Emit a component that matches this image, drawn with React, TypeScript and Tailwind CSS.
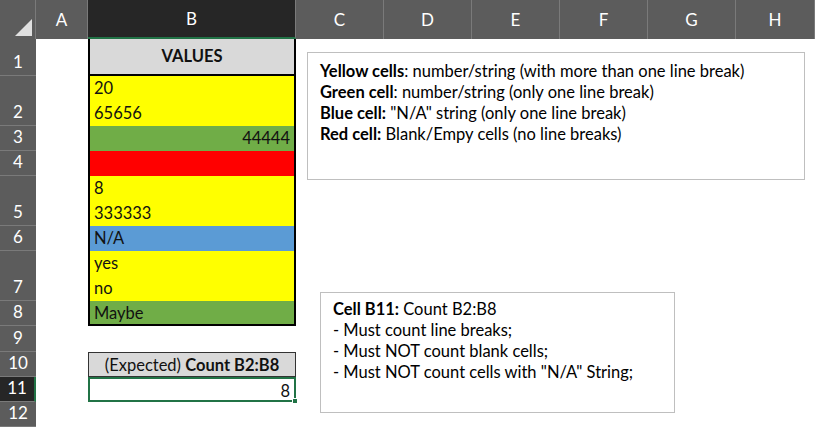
import React from 'react'

const cols = [
  { l: 'A', w: 52 },
  { l: 'B', w: 208 },
  { l: 'C', w: 88 },
  { l: 'D', w: 88 },
  { l: 'E', w: 88 },
  { l: 'F', w: 88 },
  { l: 'G', w: 88 },
  { l: 'H', w: 79 },
]

const rows = [
  { n: 1, h: 37 },
  { n: 2, h: 50 },
  { n: 3, h: 25 },
  { n: 4, h: 25 },
  { n: 5, h: 50 },
  { n: 6, h: 25 },
  { n: 7, h: 50 },
  { n: 8, h: 25 },
  { n: 9, h: 26 },
  { n: 10, h: 25 },
  { n: 11, h: 25 },
  { n: 12, h: 25 },
]

function BCell({ n }: { n: number }) {
  const base = 'h-full px-[4px] text-[16.5px] leading-[25px] text-[#111]'
  switch (n) {
    case 1:
      return <div className={`${base} bg-[#d9d9d9] border-x-2 border-b-2 border-black flex items-center justify-center font-bold`}>VALUES</div>
    case 2:
      return <div className={`${base} bg-[#ffff00] border-x-2 border-black`}><div>20</div><div>65656</div></div>
    case 3:
      return <div className={`${base} bg-[#70ad47] border-x-2 border-black text-right`}>44444</div>
    case 4:
      return <div className={`${base} bg-[#ff0000] border-x-2 border-black`} />
    case 5:
      return <div className={`${base} bg-[#ffff00] border-x-2 border-black`}><div>8</div><div>333333</div></div>
    case 6:
      return <div className={`${base} bg-[#5b9bd5] border-x-2 border-black`}>N/A</div>
    case 7:
      return <div className={`${base} bg-[#ffff00] border-x-2 border-black`}><div>yes</div><div>no</div></div>
    case 8:
      return <div className={`${base} bg-[#70ad47] border-x-2 border-b-2 border-black`}>Maybe</div>
    case 10:
      return <div className={`${base} bg-[#d9d9d9] border border-[#333] text-center leading-[23px]`}>(Expected) <b>Count B2:B8</b></div>
    case 11:
      return (
        <div className={`${base} relative bg-white border-2 border-[#217346] text-right leading-[21px]`}>
          8
          <span className="absolute -right-[4px] -bottom-[4px] w-[6px] h-[6px] bg-[#217346] border border-white" />
        </div>
      )
    default:
      return <div className="h-full bg-white" />
  }
}

export default function App() {
  return (
    <div className="relative w-[815px] h-[431px] overflow-hidden bg-white" style={{ fontFamily: 'Lato, "Open Sans", sans-serif' }}>
      <div className="flex h-[39px] bg-[#5c5c5c]">
        <div className="w-[36px] h-full border-r border-[#7a7a7a] relative">
          <div className="absolute right-[3px] bottom-[3px] w-0 h-0 border-l-[17px] border-l-transparent border-b-[17px] border-b-[#e0e0e0]" />
        </div>
        {cols.map(c => (
          <div
            key={c.l}
            className={`shrink-0 flex items-center justify-center text-[17px] text-white border-r border-[#7a7a7a] ${c.l === 'B' ? 'bg-[#262626] border-b-2 border-b-[#217346]' : ''}`}
            style={{ width: c.w }}
          >
            {c.l}
          </div>
        ))}
      </div>
      {rows.map(r => (
        <div key={r.n} className="flex" style={{ height: r.h }}>
          <div className={`w-[36px] shrink-0 flex items-end justify-center pb-[1px] text-[17px] text-white border-b border-[#7a7a7a] ${r.n === 11 ? 'bg-[#262626] border-r-2 border-r-[#217346]' : 'bg-[#5c5c5c]'}`}>
            {r.n}
          </div>
          <div className="w-[52px] shrink-0 bg-white" />
          <div className="w-[208px] shrink-0"><BCell n={r.n} /></div>
          <div className="flex-1 bg-white" />
        </div>
      ))}
      <div className="absolute left-[307px] top-[52px] w-[498px] h-[128px] border border-[#bfbfbf] bg-white px-[12px] py-[8px] text-[16.5px] leading-[21px] text-black whitespace-nowrap">
        <div><b>Yellow cells</b>: number/string (with more than one line break)</div>
        <div><b>Green cell</b>: number/string (only one line break)</div>
        <div><b>Blue cell:</b> "N/A" string (only one line break)</div>
        <div><b>Red cell:</b> Blank/Empy cells (no line breaks)</div>
      </div>
      <div className="absolute left-[320px] top-[292px] w-[355px] h-[121px] border border-[#bfbfbf] bg-white px-[12px] py-[6px] text-[16.5px] leading-[21px] text-black whitespace-nowrap">
        <div><b>Cell B11:</b> Count B2:B8</div>
        <div>- Must count line breaks;</div>
        <div>- Must NOT count blank cells;</div>
        <div>- Must NOT count cells with "N/A" String;</div>
      </div>
    </div>
  )
}
